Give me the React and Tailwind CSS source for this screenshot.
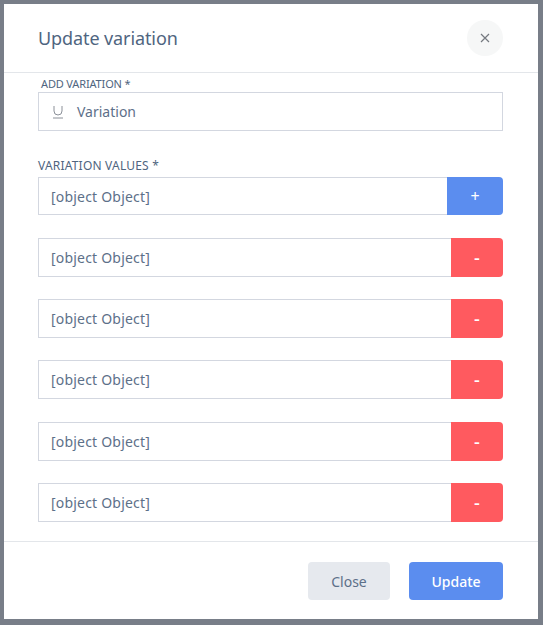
import React from "react";

function Row({ blue }) {
  return (
    <div className={blue ? "flex h-[38px] mb-[0.65px]" : "flex h-[39px] mt-[22.25px]"}>
      <div className="flex-1 min-w-0 flex items-center border border-[#d3d7e0] border-r-0 pl-3 text-[14px] tracking-[0.2px] text-[#5d7089]">
        [object Object]
      </div>
      <button className={blue
        ? "w-14 rounded-r bg-[#5b8def] text-white text-[16px] flex items-center justify-center"
        : "w-[52px] rounded-r bg-[#ff5a5f] text-white text-[18px] font-medium flex items-center justify-center"}>
        {blue ? "+" : "-"}
      </button>
    </div>
  );
}

export default function App() {
  return (
    <div className="h-[625px] w-[543px] bg-[#787e88] p-1 font-['Noto_Sans',sans-serif] overflow-hidden">
      <div className="h-[615px] w-[534px] bg-white flex flex-col">
        <div className="h-[69px] shrink-0 border-b border-[#e3e6ea] flex items-center justify-between pl-[34px] pr-[35px]">
          <h2 className="text-[18px] text-[#4f6580] tracking-[-0.1px]">Update variation</h2>
          <button className="w-9 h-9 rounded-full bg-[#f6f7f7] flex items-center justify-center">
            <svg width="10" height="10" viewBox="0 0 10 10" fill="none" stroke="#757a80" strokeWidth="1.2">
              <path d="M1 1l8 8M9 1l-8 8" />
            </svg>
          </button>
        </div>
        <div className="flex-1 pl-[34px] pr-[35px] flex flex-col">
          <label className="block mt-[3px] ml-[3px] h-[15px] text-[11px] leading-[15px] text-[#4f6580] tracking-[-0.15px]">ADD VARIATION *</label>
          <div className="h-[39px] mt-[1px] border border-[#d3d7e0] flex items-center pl-[13px] text-[14px] text-[#5d7089]">
            <svg width="12" height="14" viewBox="0 0 12 14" fill="none" stroke="#8b9098" strokeWidth="1" className="mr-[13px]">
              <path d="M2 1v5a4 4 0 0 0 8 0V1M1 13h10" />
            </svg>
            <span>Variation</span>
          </div>
          <label className="block mt-[27px] h-[16px] text-[12px] leading-[16px] text-[#4f6580] tracking-[0.2px]">VARIATION VALUES *</label>
          <div className="mt-[3px] flex flex-col">
            <Row blue />
            <Row />
            <Row />
            <Row />
            <Row />
            <Row />
          </div>
        </div>
        <div className="h-[78px] shrink-0 border-t border-[#e3e6ea] flex items-start justify-end gap-[19px] pt-5 pr-[35px]">
          <button className="w-[82px] h-[38px] rounded bg-[#e6e9ee] text-[14px] text-[#5d7089]">Close</button>
          <button className="w-[94px] h-[38px] rounded bg-[#5b8def] text-[14px] font-medium text-white">Update</button>
        </div>
      </div>
    </div>
  );
}
